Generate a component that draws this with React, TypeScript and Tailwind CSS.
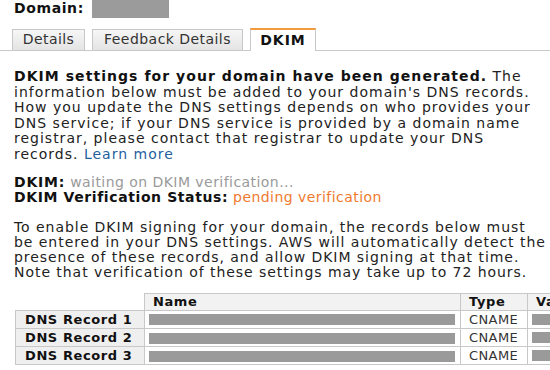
import React from 'react';

const font = { fontFamily: '"DejaVu Sans", Verdana, sans-serif' };

function Redacted({ w, className = '' }: { w: string; className?: string }) {
  return <div className={`h-[11px] bg-[#9a9a9a] ${w} ${className}`} />;
}

export default function App() {
  const records = ['DNS Record 1', 'DNS Record 2', 'DNS Record 3'];

  return (
    <div
      className="w-[550px] h-[370px] overflow-hidden bg-white text-[#222] text-[14px] leading-[15.5px] tracking-[0.45px]"
      style={font}
    >
      {/* Domain */}
      <div className="flex items-center h-[18px] pl-[14px]">
        <span className="font-bold tracking-[0.6px] text-[#111]">Domain:</span>
        <div className="ml-[8px] w-[77px] h-[18px] bg-[#9b9b9b]" />
      </div>

      {/* Tabs */}
      <div className="mt-[10px] flex items-end gap-[7px] pl-[12px] border-b border-[#c8c8c8] h-[23px]">
        <div className="w-[73px] h-[21px] flex items-center justify-center border border-b-0 border-[#c8c8c8] bg-gradient-to-b from-[#f6f6f6] to-[#e4e4e4] text-[#333]">
          Details
        </div>
        <div className="w-[151px] h-[21px] flex items-center justify-center border border-b-0 border-[#c8c8c8] bg-gradient-to-b from-[#f6f6f6] to-[#e4e4e4] text-[#333]">
          Feedback Details
        </div>
        <div className="w-[66px] h-[23px] -mb-px flex items-center justify-center border border-b-0 border-[#c8c8c8] border-t-2 border-t-[#f39a3c] bg-white font-bold tracking-[1px] text-[#111]">
          DKIM
        </div>
      </div>

      {/* Intro */}
      <div className="mt-[18px] pl-[14px] whitespace-nowrap tracking-[1px]">
        <div>
          <span className="font-bold tracking-[1.05px] text-[#111]">DKIM settings for your domain have been generated.</span> The
        </div>
        <div>information below must be added to your domain's DNS records.</div>
        <div>How you update the DNS settings depends on who provides your</div>
        <div>DNS service; if your DNS service is provided by a domain name</div>
        <div>registrar, please contact that registrar to update your DNS</div>
        <div>
          records. <a className="text-[#1f5fa0]">Learn more</a>
        </div>
      </div>

      {/* Status */}
      <div className="mt-[13px] pl-[14px] leading-[15px] whitespace-nowrap tracking-[0.45px]">
        <div>
          <span className="font-bold tracking-[0.8px] text-[#111]">DKIM:</span>{' '}
          <span className="text-[#9a9a9a]">waiting on DKIM verification...</span>
        </div>
        <div>
          <span className="font-bold tracking-[0.6px] text-[#111]">DKIM Verification Status:</span>{' '}
          <span className="text-[#f07a2e]">pending verification</span>
        </div>
      </div>

      <div className="mt-[15px] pl-[14px] leading-[15px] whitespace-nowrap tracking-[0.95px]">
        <div>To enable DKIM signing for your domain, the records below must</div>
        <div>be entered in your DNS settings. AWS will automatically detect the</div>
        <div>presence of these records, and allow DKIM signing at that time.</div>
        <div>Note that verification of these settings may take up to 72 hours.</div>
      </div>

      {/* Table */}
      <table className="mt-[13px] ml-[15px] table-fixed w-[572px] border-collapse text-[13px] leading-[16px] tracking-[0.4px]">
        <colgroup>
          <col className="w-[129px]" />
          <col className="w-[316px]" />
          <col className="w-[67px]" />
          <col className="w-[60px]" />
        </colgroup>
        <thead>
          <tr>
            <th className="p-0" />
            <th className="h-[16px] px-[8px] text-left font-bold tracking-[0.6px] bg-[#f2f2f2] border border-[#c8c8c8] text-[#111]">Name</th>
            <th className="px-[8px] text-left font-bold tracking-[0.6px] bg-[#f2f2f2] border border-[#c8c8c8] text-[#111]">Type</th>
            <th className="px-[8px] text-left font-bold tracking-[0.6px] bg-[#f2f2f2] border border-[#c8c8c8] text-[#111] whitespace-nowrap overflow-hidden">Value</th>
          </tr>
        </thead>
        <tbody>
          {records.map((r, i) => (
            <tr key={r}>
              <th className="h-[18px] px-[9px] text-left font-bold tracking-[0.6px] bg-[#efefef] border border-[#c8c8c8] text-[#111] whitespace-nowrap">{r}</th>
              <td className="px-[4px] border border-[#c8c8c8]">
                <Redacted w="w-[306px]" className={i === 0 ? '' : 'mt-[2px]'} />
              </td>
              <td className="px-[8px] border border-[#c8c8c8] text-[#333]">CNAME</td>
              <td className="px-[4px] border border-[#c8c8c8]">
                <Redacted w="w-[60px]" />
              </td>
            </tr>
          ))}
        </tbody>
      </table>
    </div>
  );
}
